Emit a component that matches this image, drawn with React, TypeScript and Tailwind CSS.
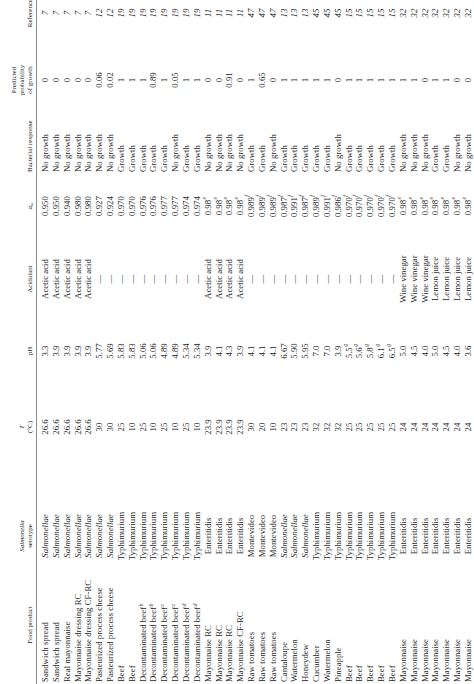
import React from "react";

type R = [string, string, string, string, string, string, string, string, string, string, string, string];

const rows: R[] = [
  ["Sandwich spread", "", "Salmonellae", "26.6", "3.3", "", "Acetic acid", "0.950", "", "No growth", "0", "7"],
  ["Sandwich spread", "", "Salmonellae", "26.6", "3.9", "", "Acetic acid", "0.950", "", "No growth", "0", "7"],
  ["Real mayonnaise", "", "Salmonellae", "26.6", "3.9", "", "Acetic acid", "0.940", "", "No growth", "0", "7"],
  ["Mayonnaise dressing RC", "", "Salmonellae", "26.6", "3.9", "", "Acetic acid", "0.980", "", "No growth", "0", "7"],
  ["Mayonnaise dressing CF-RC", "", "Salmonellae", "26.6", "3.9", "", "Acetic acid", "0.980", "", "No growth", "0", "7"],
  ["Pasteurized process cheese", "", "Salmonellae", "30", "5.77", "", "—", "0.927", "", "No growth", "0.06", "12"],
  ["Pasteurized process cheese", "", "Salmonellae", "30", "5.69", "", "—", "0.924", "", "No growth", "0.02", "12"],
  ["Beef", "", "Typhimurium", "25", "5.83", "", "—", "0.970", "", "Growth", "1", "19"],
  ["Beef", "", "Typhimurium", "10", "5.83", "", "—", "0.970", "", "Growth", "1", "19"],
  ["Decontaminated beef", "b", "Typhimurium", "25", "5.06", "", "—", "0.976", "", "Growth", "1", "19"],
  ["Decontaminated beef", "b", "Typhimurium", "10", "5.06", "", "—", "0.976", "", "Growth", "0.89", "19"],
  ["Decontaminated beef", "c", "Typhimurium", "25", "4.89", "", "—", "0.977", "", "Growth", "1", "19"],
  ["Decontaminated beef", "c", "Typhimurium", "10", "4.89", "", "—", "0.977", "", "No growth", "0.05", "19"],
  ["Decontaminated beef", "d", "Typhimurium", "25", "5.34", "", "—", "0.974", "", "Growth", "1", "19"],
  ["Decontaminated beef", "d", "Typhimurium", "10", "5.34", "", "—", "0.974", "", "Growth", "1", "19"],
  ["Mayonnaise RC", "", "Enteritidis", "23.9", "3.9", "", "Acetic acid", "0.98", "e", "No growth", "0", "11"],
  ["Mayonnaise RC", "", "Enteritidis", "23.9", "4.1", "", "Acetic acid", "0.98", "e", "No growth", "0", "11"],
  ["Mayonnaise RC", "", "Enteritidis", "23.9", "4.3", "", "Acetic acid", "0.98", "e", "No growth", "0.91", "11"],
  ["Mayonnaise CF-RC", "", "Enteritidis", "23.9", "3.9", "", "Acetic acid", "0.98", "e", "No growth", "0", "11"],
  ["Raw tomatoes", "", "Montevideo", "30", "4.1", "", "—", "0.989", "f", "Growth", "1", "47"],
  ["Raw tomatoes", "", "Montevideo", "20", "4.1", "", "—", "0.989", "f", "Growth", "0.65", "47"],
  ["Raw tomatoes", "", "Montevideo", "10", "4.1", "", "—", "0.989", "f", "No growth", "0", "47"],
  ["Cantaloupe", "", "Salmonellae", "23", "6.67", "", "—", "0.987", "f", "Growth", "1", "13"],
  ["Watermelon", "", "Salmonellae", "23", "5.90", "", "—", "0.991", "f", "Growth", "1", "13"],
  ["Honeydew", "", "Salmonellae", "23", "5.95", "", "—", "0.987", "f", "Growth", "1", "13"],
  ["Cucumber", "", "Typhimurium", "32", "7.0", "", "—", "0.989", "f", "Growth", "1", "45"],
  ["Watermelon", "", "Typhimurium", "32", "7.0", "", "—", "0.991", "f", "Growth", "1", "45"],
  ["Pineapple", "", "Typhimurium", "32", "3.9", "", "—", "0.986", "f", "No growth", "0", "45"],
  ["Beef", "", "Typhimurium", "25", "5.5", "g", "—", "0.970", "f", "Growth", "1", "15"],
  ["Beef", "", "Typhimurium", "25", "5.6", "g", "—", "0.970", "f", "Growth", "1", "15"],
  ["Beef", "", "Typhimurium", "25", "5.8", "g", "—", "0.970", "f", "Growth", "1", "15"],
  ["Beef", "", "Typhimurium", "25", "6.1", "g", "—", "0.970", "f", "Growth", "1", "15"],
  ["Beef", "", "Typhimurium", "25", "6.5", "g", "—", "0.970", "f", "Growth", "1", "15"],
  ["Mayonnaise", "", "Enteritidis", "24", "5.0", "", "Wine vinegar", "0.98", "e", "No growth", "1", "32"],
  ["Mayonnaise", "", "Enteritidis", "24", "4.5", "", "Wine vinegar", "0.98", "e", "No growth", "1", "32"],
  ["Mayonnaise", "", "Enteritidis", "24", "4.0", "", "Wine vinegar", "0.98", "e", "No growth", "0", "32"],
  ["Mayonnaise", "", "Enteritidis", "24", "5.0", "", "Lemon juice", "0.98", "e", "Growth", "1", "32"],
  ["Mayonnaise", "", "Enteritidis", "24", "4.5", "", "Lemon juice", "0.98", "e", "Growth", "1", "32"],
  ["Mayonnaise", "", "Enteritidis", "24", "4.0", "", "Lemon juice", "0.98", "e", "No growth", "0", "32"],
  ["Mayonnaise", "", "Enteritidis", "24", "3.6", "", "Lemon juice", "0.98", "e", "No growth", "0", "32"],
];

function Sup({ t }: { t: string }) {
  if (!t) return null;
  return <span className="italic text-[6px] leading-none relative -top-[3px] ml-[0.5px]">{t}</span>;
}

function Header() {
  return (
    <div className="flex items-end h-[37px] border-b border-[#8a8a8a] pb-[2px] text-[7px] leading-[8px]">
      <div className="w-[118px] shrink-0 flex justify-center whitespace-nowrap">Food product</div>
      <div className="w-[60px] shrink-0 flex flex-col items-center whitespace-nowrap">
        <span className="italic">Salmonella</span>
        <span>serotype</span>
      </div>
      <div className="ml-[59px] w-[40px] shrink-0 flex flex-col items-center whitespace-nowrap">
        <span className="italic">T</span>
        <span>(°C)</span>
      </div>
      <div className="ml-[36px] w-[40px] shrink-0 flex justify-center whitespace-nowrap">pH</div>
      <div className="ml-[20px] w-[64px] shrink-0 flex justify-center whitespace-nowrap">Acidulant</div>
      <div className="ml-[21px] w-[40px] shrink-0 flex justify-center whitespace-nowrap">
        <span className="italic">a</span>
        <span className="italic text-[5px] relative top-[2px]">w</span>
      </div>
      <div className="ml-[14px] w-[60px] shrink-0 flex whitespace-nowrap">Bacterial response</div>
      <div className="ml-[7px] w-[50px] shrink-0 flex flex-col items-center whitespace-nowrap">
        <span>Predicted</span>
        <span>probability</span>
        <span>of growth</span>
      </div>
      <div className="ml-[29px] w-[26px] shrink-0 flex justify-center whitespace-nowrap">Reference</div>
    </div>
  );
}

function Row({ r }: { r: R }) {
  const [food, fsup, sero, t, ph, phsup, acid, aw, awsup, resp, prob, ref] = r;
  return (
    <div className="flex items-center h-[10.85px] text-[8.8px] leading-none">
      <div className="w-[118px] shrink-0 pl-[2px] whitespace-nowrap">
        {food}
        <Sup t={fsup} />
      </div>
      <div className={"w-[60px] shrink-0 flex justify-center whitespace-nowrap " + (sero === "Salmonellae" ? "italic" : "")}>
        {sero}
      </div>
      <div className="ml-[59px] w-[40px] shrink-0 flex justify-center whitespace-nowrap">{t}</div>
      <div className="ml-[36px] w-[40px] shrink-0 flex justify-center whitespace-nowrap">
        {ph}
        <Sup t={phsup} />
      </div>
      <div className="ml-[20px] w-[64px] shrink-0 flex justify-center whitespace-nowrap">{acid}</div>
      <div className="ml-[21px] w-[40px] shrink-0 flex justify-center whitespace-nowrap">
        {aw}
        <Sup t={awsup} />
      </div>
      <div className="ml-[14px] w-[60px] shrink-0 whitespace-nowrap">{resp}</div>
      <div className="ml-[7px] w-[50px] shrink-0 flex justify-center whitespace-nowrap">{prob}</div>
      <div className="ml-[29px] w-[26px] shrink-0 flex justify-center whitespace-nowrap italic">{ref}</div>
    </div>
  );
}

export default function App() {
  return (
    <div className="w-[474px] h-[684px] overflow-hidden bg-white">
      <div
        className="w-[684px] h-[474px] origin-top-left translate-y-[684px] -rotate-90 text-[#262626]"
        style={{ fontFamily: '"Liberation Serif", "Times New Roman", serif' }}
      >
        <Header />
        <div className="pt-[3px]">
          {rows.map((r, i) => (
            <Row key={i} r={r} />
          ))}
        </div>
      </div>
    </div>
  );
}
